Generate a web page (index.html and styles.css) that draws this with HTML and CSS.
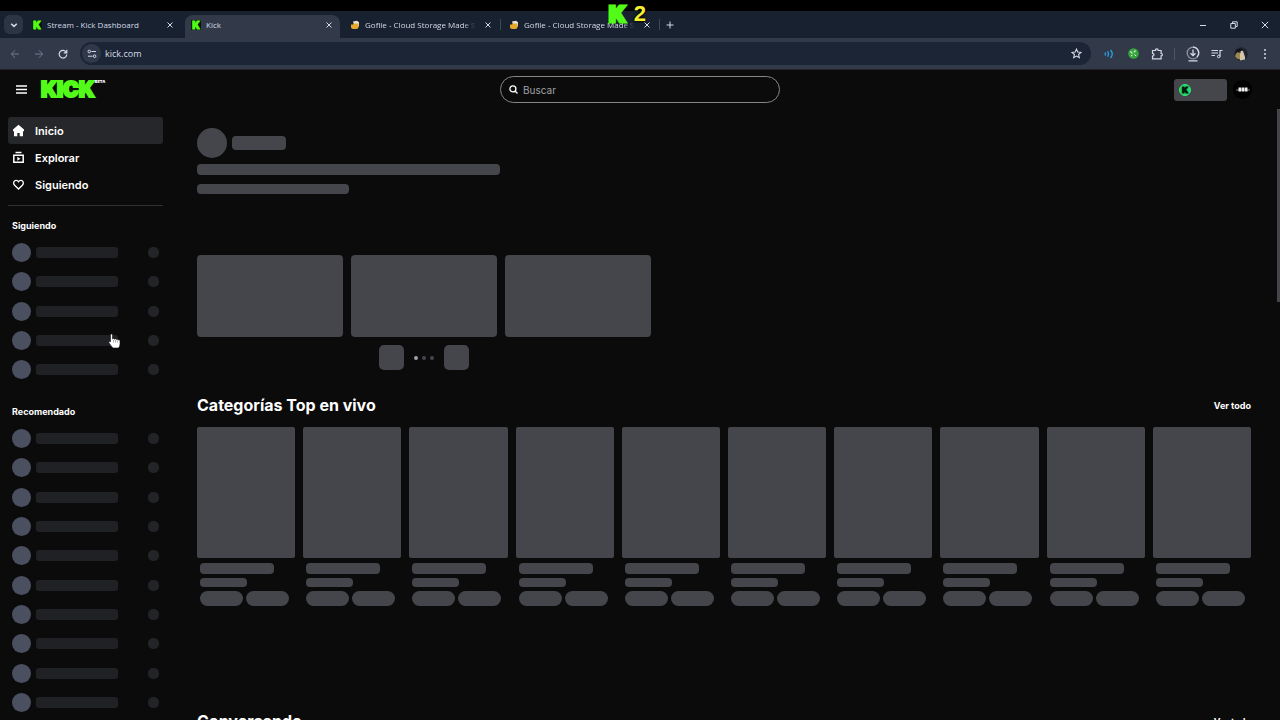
FILE: index.html
```html
<!DOCTYPE html>
<html lang="es">
<head>
    <meta charset="UTF-8">
    <meta name="viewport" content="width=device-width, initial-scale=1.0">
    <title>Kick</title>
    <link rel="stylesheet" href="styles.css">
</head>
<body>
    <div class="window">
        <!-- Barra de pestañas -->
        <div class="tabstrip">
            <button class="tab-search" aria-label="Buscar pestañas">
                <svg width="8" height="8" viewBox="0 0 8 8"><path stroke-width="1.500" d="M1.200 2.700 4 5.400l2.800-2.700" /></svg>
            </button>
            <div class="tab">
                <span class="favicon">K</span>
                <span class="tab-title">Stream - Kick Dashboard</span>
                <button class="tab-close" aria-label="Cerrar"><svg width="6" height="6" viewBox="0 0 6 6"><path d="M.5.5l5 5M5.500.5l-5 5" /></svg></button>
            </div>
            <div class="tab active">
                <span class="favicon">K</span>
                <span class="tab-title">Kick</span>
                <button class="tab-close" aria-label="Cerrar"><svg width="6" height="6" viewBox="0 0 6 6"><path d="M.5.5l5 5M5.500.5l-5 5" /></svg></button>
            </div>
            <div class="tab separated">
                <svg class="gofile" width="10" height="10" viewBox="0 0 10 10"><path d="M3 1.500 7 .8l2 1.500v4L5 8z" fill="#e9e4d8" stroke="none" /><path d="M1 4.500h2l1-1h4.500V7q0 2-2 2H3Q1 9 1 7z" fill="#e5a92c" stroke="none" /></svg>
                <span class="tab-title">Gofile - Cloud Storage Made Simple</span>
                <button class="tab-close" aria-label="Cerrar"><svg width="6" height="6" viewBox="0 0 6 6"><path d="M.5.5l5 5M5.500.5l-5 5" /></svg></button>
            </div>
            <div class="tab separated">
                <svg class="gofile" width="10" height="10" viewBox="0 0 10 10"><path d="M3 1.500 7 .8l2 1.500v4L5 8z" fill="#e9e4d8" stroke="none" /><path d="M1 4.500h2l1-1h4.500V7q0 2-2 2H3Q1 9 1 7z" fill="#e5a92c" stroke="none" /></svg>
                <span class="tab-title">Gofile - Cloud Storage Made Simple</span>
                <button class="tab-close" aria-label="Cerrar"><svg width="6" height="6" viewBox="0 0 6 6"><path d="M.5.5l5 5M5.500.5l-5 5" /></svg></button>
            </div>
            <button class="tab-new" aria-label="Nueva pestaña"><svg width="8" height="8" viewBox="0 0 8 8"><path d="M4 .5v7M.5 4h7" /></svg></button>
            <div class="window-buttons">
                <button aria-label="Minimizar"><svg width="8" height="8" viewBox="0 0 8 8"><path d="M1 4.500h6" /></svg></button>
                <button aria-label="Restaurar"><svg width="8" height="8" viewBox="0 0 8 8"><path d="M.8 2.500h4.500v4.700H.8zM2.500 2.300V.8h4.700v4.700H5.500" /></svg></button>
                <button aria-label="Cerrar ventana"><svg width="8" height="8" viewBox="0 0 8 8"><path d="M.8.8l6.400 6.400M7.200.8.8 7.200" /></svg></button>
            </div>
        </div>

        <!-- Barra de direcciones -->
        <div class="toolbar">
            <button class="tool dim" aria-label="Atrás"><svg width="10" height="10" viewBox="0 0 10 10"><path d="M9 5H1.500M5 1.300 1.300 5 5 8.700" /></svg></button>
            <button class="tool dim" aria-label="Adelante"><svg width="10" height="10" viewBox="0 0 10 10"><path d="M1 5h7.500M5 1.300 8.700 5 5 8.700" /></svg></button>
            <button class="tool" aria-label="Recargar"><svg width="10" height="10" viewBox="0 0 10 10"><path stroke-width="1.200" d="M8.300 3.300A3.800 3.800 0 1 0 8.800 5.500M8.800.8v3H5.800" /></svg></button>
            <div class="omnibox">
                <button class="site-info" aria-label="Información del sitio"><svg width="10" height="10" viewBox="0 0 10 10"><path d="M4.500 2.500H9M1 7.200h4.500" /><circle cx="2.300" cy="2.500" r="1.300" /><circle cx="7.600" cy="7.200" r="1.300" /></svg></button>
                <input type="text" class="url" value="kick.com" aria-label="Dirección">
                <button class="tool" aria-label="Favoritos"><svg width="11" height="11" viewBox="0 0 24 24"><path stroke-width="2.400" d="m12 2.500 2.800 6.400 7 .7-5.300 4.700 1.600 6.900-6.100-3.700-6.100 3.700 1.600-6.900L2.200 9.600l7-.7z" /></svg></button>
            </div>
            <button class="tool wave" aria-label="Audio"><svg width="10" height="10" viewBox="0 0 10 10"><path stroke-width="1.300" d="M1 3.500q1 1.500 0 3M3.500 2.300q2 2.700 0 5.400M6.500 1q3.500 4 0 8" /></svg></button>
            <button class="tool" aria-label="Extensión"><svg width="11" height="11" viewBox="0 0 11 11"><circle cx="5.500" cy="5.500" r="5.300" fill="#35a53c" stroke="none" /><path d="M3 3v2h1.500M8 3H6.300v1.500M3 8l1.500-1M6.500 6.500 8 8" stroke="#e2f7e2" /></svg></button>
            <button class="tool" aria-label="Extensiones"><svg width="12" height="12" viewBox="0 0 12 12"><path stroke-width="1.200" d="M1.500 2.500h3q0-1.700 1.300-1.700T7.100 2.500h3v3q1.300 0 1.300 1.200t-1.300 1.200v3H1.500V8q1.500 0 1.500-1.300T1.500 5.300z" /></svg></button>
            <span class="divider"></span>
            <button class="tool" aria-label="Descargas"><svg width="14" height="16" viewBox="0 0 14 16"><circle cx="7" cy="7" r="5.800" stroke="#8d94a3" stroke-width="1.300" /><path stroke-width="1.300" d="M7 1.200A5.800 5.800 0 0 1 11 11M7 3.500v6M4.500 7.200 7 9.700l2.500-2.500M2.500 14.800h9" /></svg></button>
            <button class="tool" aria-label="Multimedia"><svg width="12" height="10" viewBox="0 0 12 10"><path stroke-width="1.200" d="M.5 1.500h6.500M.5 4h6.500M.5 6.500h3.500M9 7.500v-6h2.500" /><circle cx="7.700" cy="7.500" r="1.300" /></svg></button>
            <button class="tool" aria-label="Perfil"><svg width="14" height="14" viewBox="0 0 14 14"><circle cx="7" cy="7" r="6.800" fill="#20232d" stroke="none" /><path d="M1 9 3 5l3 1v6.500Q2 12 1 9z" fill="#9e8850" stroke="none" /><path d="M6 13.500 6 7l1-3.500 2 .5 2 6v2.500z" fill="#d3c6aa" stroke="none" /><path d="M2 5.500q3-4 6-2.500" stroke="#0c0e13" stroke-width="1.500" /></svg></button>
            <button class="tool" aria-label="Menú del navegador"><svg width="4" height="12" viewBox="0 0 4 12"><g fill="#d5dae5" stroke="none"><circle cx="2" cy="2" r="1" /><circle cx="2" cy="6" r="1" /><circle cx="2" cy="10" r="1" /></g></svg></button>
        </div>

        <!-- Página -->
        <div class="page">
            <header class="header">
                <div class="brand">
                    <button class="menu" aria-label="Menú"><svg width="11" height="9" viewBox="0 0 11 9"><path d="M0 1h11M0 4.500h11M0 8h11" /></svg></button>
                    <a class="logo" href="#">KICK<sup class="beta">BETA</sup></a>
                </div>
                <label class="search">
                    <svg width="9" height="9" viewBox="0 0 9 9"><circle cx="3.900" cy="3.900" r="3" /><path d="m6 6 2.500 2.500" /></svg>
                    <input type="text" placeholder="Buscar" aria-label="Buscar">
                </label>
                <div class="account">
                    <button class="wallet" aria-label="Kicks"><span class="coin">K</span></button>
                    <button class="profile" aria-label="Cuenta"><svg width="14" height="8" viewBox="0 0 14 8"><path d="M0 4h14" stroke="#777" /><path d="M2.500 1.500h3v4h-3zM6 1.500h2.500v4H6zM9 1.500h2.500v4H9z" fill="#eee" stroke="none" /></svg></button>
                </div>
            </header>

            <div class="body">
                <aside class="sidebar">
                    <nav class="nav">
                        <a class="nav-link current" href="#">
                            <svg width="13" height="13" viewBox="0 0 13 13"><path fill="#fff" stroke="none" d="M6.500.8 1 5.600v1.600h1v5h3.300V9h2.400v3.200H11v-5h1V5.600z" /></svg>
                            Inicio
                        </a>
                        <a class="nav-link" href="#">
                            <svg width="13" height="13" viewBox="0 0 13 13"><path stroke-width="1.500" d="M1.800 4.300h9.400v7H1.800z" /><path d="M3.500 1.500h6" stroke-width="1.500" /><path d="M5.300 5.800v4l3.200-2z" fill="#fff" stroke="none" /></svg>
                            Explorar
                        </a>
                        <a class="nav-link" href="#">
                            <svg width="13" height="13" viewBox="0 0 13 13"><path stroke-width="1.300" d="M6.500 11 2.600 7.200C.6 5.200 2 2.300 4.200 2.300c1.100 0 1.800.6 2.300 1.400.5-.8 1.200-1.400 2.300-1.400 2.200 0 3.600 2.900 1.600 4.900z" /></svg>
                            Siguiendo
                        </a>
                    </nav>
                    <h2 class="side-title">Siguiendo</h2>
                    <ul class="channels following" id="following"></ul>
                    <h2 class="side-title">Recomendado</h2>
                    <ul class="channels recommended" id="recommended"></ul>
                </aside>

                <main class="main">
                    <section class="featured">
                        <div class="streamer">
                            <span class="bone streamer-avatar"></span>
                            <span class="bone streamer-name"></span>
                        </div>
                        <div class="bone line-long"></div>
                        <div class="bone line-short"></div>
                        <div class="previews">
                            <div class="bone"></div>
                            <div class="bone"></div>
                            <div class="bone"></div>
                        </div>
                        <div class="pager">
                            <button class="bone" aria-label="Anterior"></button>
                            <span class="dots"><i></i><i></i><i></i></span>
                            <button class="bone" aria-label="Siguiente"></button>
                        </div>
                    </section>

                    <section class="shelf">
                        <div class="shelf-head">
                            <h1>Categorías Top en vivo</h1>
                            <a href="#">Ver todo</a>
                        </div>
                        <div class="categories" id="categories"></div>
                    </section>

                    <section class="shelf">
                        <div class="shelf-head">
                            <h1>Conversando</h1>
                            <a href="#">Ver todo</a>
                        </div>
                    </section>
                </main>
            </div>
            <div class="scroll-thumb"></div>
        </div>
    </div>

    <!-- Contador sobre las pestañas -->
    <div class="counter"><span class="counter-k">K</span><span class="counter-number">2</span></div>

    <svg class="pointer" width="13" height="16" viewBox="0 0 13 16"><path d="M2.500 1.500Q3.500.3 4.500 1.500V6q1-1 2 .2 1-.9 1.900.3 1-.8 1.800.4 1.500-.7 1.800 1V11q0 2.500-1.500 4H5Q3 13 .8 9.500.5 8 2.500 8.700z" fill="#fff" stroke="#111" stroke-width=".6" /><path d="M5.500 7v2.500M7.500 7v2.500M9.500 7.500v2" stroke="#555" stroke-width=".5" /></svg>

    <script>
        const channel = '<li class="channel"><span class="avatar"></span><span class="name"></span><span class="viewers"></span></li>';
        document.getElementById("following").innerHTML = channel.repeat(5);
        document.getElementById("recommended").innerHTML = channel.repeat(10);

        const category = '<div class="category"><div class="bone cover"></div><div class="bone title"></div><div class="bone views"></div><div class="tags"><span class="bone"></span><span class="bone"></span></div></div>';
        document.getElementById("categories").innerHTML = category.repeat(10);
    </script>
</body>
</html>
```
FILE: styles.css
```css
* {
    box-sizing: border-box;
}
body {
    margin: 0;
    background-color: #000;
    color: #fff;
    font-family: Inter, "Liberation Sans", sans-serif;
    overflow: hidden;
}
button {
    display: flex;
    align-items: center;
    justify-content: center;
    padding: 0;
    border: none;
    background: none;
    color: inherit;
}
input {
    min-width: 0;
    padding: 0;
    border: none;
    outline: none;
    background: none;
    color: inherit;
}
a {
    color: inherit;
    text-decoration: none;
}
h1, h2, ul {
    margin: 0;
    padding: 0;
}
svg {
    flex: none;
    fill: none;
    stroke: currentColor;
}
.window {
    display: flex;
    flex-direction: column;
    height: 100vh;
    padding-top: 11px;
}

/* Pestañas */
.tabstrip {
    display: flex;
    flex: none;
    align-items: center;
    height: 27px;
    padding-left: 4px;
    background-color: #17212f;
    color: #d5dae5;
    font-family: "Open Sans", "Noto Sans", sans-serif;
}
.tab-search {
    width: 19px;
    height: 19px;
    margin-right: 3px;
    border-radius: 6px;
    background-color: #2c3544;
}
.tab {
    position: relative;
    display: flex;
    align-items: center;
    gap: 5px;
    width: 159px;
    height: 27px;
    padding: 0 12px 0 6px;
}
.tab.active::before {
    content: "";
    position: absolute;
    z-index: 0;
    inset: 4px 4px 0 0;
    border-radius: 8px 8px 0 0;
    background-color: #323a4a;
}
.tab > * {
    position: relative;
}
.tab.separated::after {
    content: "";
    position: absolute;
    right: 2px;
    width: 1px;
    height: 11px;
    background-color: #3d4657;
}
.favicon {
    flex: none;
    width: 10px;
    height: 10px;
    background-color: #07140a;
    color: #53fc18;
    font: 900 10px/10px Inter, sans-serif;
    text-align: center;
    -webkit-text-stroke: 1px #53fc18;
}
.tab-title {
    flex: 1;
    overflow: hidden;
    font-size: 8px;
    white-space: nowrap;
}
.separated .tab-title {
    margin-right: 4px;
    mask-image: linear-gradient(to right, #000 88%, transparent);
}
.tab-close {
    width: 6px;
    height: 12px;
}
.tab-new {
    width: 16px;
    height: 16px;
}
.window-buttons {
    display: flex;
    margin-left: auto;
}
.window-buttons button {
    width: 31px;
    height: 27px;
}

/* Barra de herramientas */
.toolbar {
    display: flex;
    flex: none;
    align-items: center;
    height: 31px;
    padding: 0 3px;
    background-color: #323a4a;
    color: #d5dae5;
}
.tool {
    flex: none;
    width: 24px;
    height: 24px;
}
.dim {
    color: #727b8c;
}
.wave {
    color: #2a9fe8;
}
.omnibox {
    display: flex;
    flex: 1;
    align-items: center;
    height: 23px;
    margin: 0 6px 0 5px;
    padding: 0 3px 0 2px;
    border-radius: 12px;
    background-color: #1c2535;
}
.site-info {
    width: 19px;
    height: 19px;
    border-radius: 50%;
    background-color: #303949;
}
.url {
    flex: 1;
    margin-left: 4px;
    font: 9px "Open Sans", "Noto Sans", sans-serif;
}
.divider {
    width: 1px;
    height: 12px;
    margin: 0 6px 0 5px;
    background-color: #4d5667;
}

/* Página */
.page {
    position: relative;
    flex: 1;
    min-height: 0;
    overflow: hidden;
    border-top: 1px solid #25222a;
    background-color: #0b0b0c;
}
.header {
    display: grid;
    grid-template-columns: 1fr 280px 1fr;
    align-items: center;
    height: 39px;
    padding: 0 14px;
}
.brand {
    display: flex;
    align-items: center;
}
.menu {
    width: 15px;
    height: 15px;
    margin-right: 12px;
}
.menu svg {
    stroke-width: 1.5;
}
.logo {
    display: flex;
    color: #53fc18;
    font-size: 21px;
    font-weight: 900;
    line-height: 24px;
    -webkit-text-stroke: 2px #53fc18;
}
.beta {
    color: #fff;
    font-size: 4px;
    line-height: 8px;
    -webkit-text-stroke: 0;
}
.search {
    display: flex;
    align-items: center;
    gap: 5px;
    height: 27px;
    padding: 0 8px;
    border: 1px solid #85868a;
    border-radius: 14px;
}
.search svg {
    stroke-width: 1.3;
}
.search input {
    flex: 1;
    font: 10px Inter, sans-serif;
}
.search input::placeholder {
    color: #a0a1a5;
}
.account {
    display: flex;
    align-items: center;
    justify-content: flex-end;
    gap: 6px;
    padding-right: 14px;
}
.wallet {
    justify-content: flex-start;
    width: 53px;
    height: 22px;
    padding-left: 5px;
    border-radius: 3px;
    background-color: #44464b;
}
.coin {
    width: 12px;
    height: 12px;
    border: 1px solid #2eea75;
    border-radius: 50%;
    background-color: #20d869;
    color: #04180b;
    font: 900 8px/10px Inter, sans-serif;
    -webkit-text-stroke: 1px #04180b;
}
.profile {
    width: 19px;
    height: 19px;
    border-radius: 50%;
    background-color: #000;
}
.body {
    display: flex;
    gap: 34px;
    padding: 8px 29px 0 8px;
}

/* Menú lateral */
.sidebar {
    flex: none;
    width: 155px;
}
.nav {
    padding-bottom: 7px;
    border-bottom: 1px solid #303135;
    margin-bottom: 12px;
}
.nav-link {
    display: flex;
    align-items: center;
    gap: 10px;
    height: 27px;
    padding-left: 4px;
    border-radius: 3px;
    font-size: 11px;
    font-weight: 600;
}
.nav-link.current {
    background-color: #25272b;
}
.side-title {
    padding-left: 4px;
    font-size: 9px;
    font-weight: 700;
    line-height: 16px;
}
.channels {
    display: flex;
    flex-direction: column;
    justify-content: space-between;
    padding: 0 4px;
    margin-top: 9px;
    list-style: none;
}
.following {
    height: 136px;
    margin-bottom: 25px;
}
.recommended {
    height: 283px;
}
.channel {
    display: flex;
    align-items: center;
    height: 19px;
}
.avatar {
    width: 19px;
    height: 19px;
    margin-right: 5px;
    border-radius: 50%;
    background-color: #4b5060;
}
.name {
    width: 82px;
    height: 11px;
    border-radius: 3px;
    background-color: #1f2124;
}
.viewers {
    width: 11px;
    height: 11px;
    margin-left: auto;
    border-radius: 5px;
    background-color: #222427;
}

/* Contenido */
.main {
    flex: 1;
    min-width: 0;
    padding-top: 11px;
}
.bone {
    display: block;
    border-radius: 4px;
    background-color: #44464b;
}
.featured {
    width: 454px;
}
.streamer {
    display: flex;
    align-items: center;
    gap: 5px;
    margin-bottom: 6px;
}
.streamer-avatar {
    width: 30px;
    height: 30px;
    border-radius: 50%;
}
.streamer-name {
    width: 54px;
    height: 14px;
}
.line-long {
    width: 303px;
    height: 11px;
    margin-bottom: 9px;
}
.line-short {
    width: 152px;
    height: 10px;
}
.previews {
    display: grid;
    grid-template-columns: repeat(3, 1fr);
    gap: 8px;
    margin-top: 61px;
}
.previews .bone {
    height: 82px;
}
.pager {
    display: flex;
    align-items: center;
    justify-content: center;
    gap: 10px;
    margin: 8px 0 22px;
}
.pager .bone {
    width: 25px;
    height: 25px;
    border-radius: 5px;
}
.dots {
    display: flex;
    gap: 4px;
}
.dots i {
    width: 4px;
    height: 4px;
    border-radius: 50%;
    background-color: #44464b;
}
.dots i:first-child {
    background-color: #a0a1a5;
}
.shelf {
    margin-bottom: 102px;
}
.shelf-head {
    display: flex;
    align-items: center;
    justify-content: space-between;
    height: 26px;
    margin-bottom: 9px;
}
.shelf-head h1 {
    font-size: 16px;
    font-weight: 700;
}
.shelf-head a {
    font-size: 9px;
    font-weight: 700;
}
.categories {
    display: grid;
    grid-template-columns: repeat(10, 1fr);
    gap: 8px;
}
.cover {
    height: 131px;
    margin-bottom: 5px;
    border-radius: 2px;
}
.title {
    width: 74px;
    height: 11px;
    margin: 0 0 4px 3px;
}
.views {
    width: 47px;
    height: 9px;
    margin: 0 0 4px 3px;
}
.tags {
    display: flex;
    gap: 3px;
    margin-left: 3px;
}
.tags .bone {
    width: 43px;
    height: 15px;
    border-radius: 8px;
}
.scroll-thumb {
    position: absolute;
    top: 39px;
    right: 0;
    width: 3px;
    height: 193px;
    background-color: #44464b;
}

/* Elementos flotantes */
.counter {
    position: absolute;
    top: 2px;
    left: 609px;
    display: flex;
    align-items: center;
    gap: 8px;
    line-height: 24px;
}
.counter-k {
    color: #53fc18;
    font-size: 22px;
    font-weight: 900;
    -webkit-text-stroke: 3px #53fc18;
}
.counter-number {
    color: #f6ef2c;
    font: 700 22px/24px "Liberation Sans", sans-serif;
    text-shadow: 0 0 2px #000, 0 0 3px #000;
}
.pointer {
    position: absolute;
    top: 333px;
    left: 108px;
}
```
